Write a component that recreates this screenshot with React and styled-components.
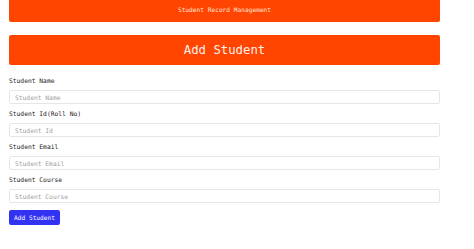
import styled, { createGlobalStyle } from 'styled-components';

const GlobalStyle = createGlobalStyle`
  body {
    margin: 0;
    background: #ffffff;
    font-family: "DejaVu Sans Mono", "Liberation Mono", monospace;
  }
`;

const Page = styled.div`
  width: 431px;
  margin-left: 9px;
  display: flex;
  flex-direction: column;
`;

const Header = styled.header`
  background-color: #ff4500;
  height: 22px;
  border-radius: 0 0 2px 2px;
  color: #ffe4d8;
  font-size: 6.2px;
  line-height: 8px;
  padding-top: 5.5px;
  box-sizing: border-box;
  text-align: center;
`;

const Title = styled.h1`
  margin: 13px 0 0 0;
  background-color: #ff4500;
  height: 30px;
  border-radius: 2px;
  color: #fff0e8;
  font-size: 12.3px;
  font-weight: normal;
  line-height: 30px;
  text-align: center;
`;

const Form = styled.form`
  display: flex;
  flex-direction: column;
  padding-top: 12px;
`;

const Field = styled.div`
  display: flex;
  flex-direction: column;
  gap: 5px;
  margin-bottom: 6px;
`;

const Label = styled.label`
  font-size: 6.3px;
  line-height: 8px;
  color: #1a1a1a;
  font-weight: normal;
`;

const Input = styled.input`
  height: 14px;
  box-sizing: border-box;
  border: 1px solid #e6e6e6;
  border-radius: 2px;
  padding: 0 5px;
  font-family: inherit;
  font-size: 6.3px;
  color: #333;
  outline: none;
  &::placeholder {
    color: #a0a0a0;
  }
`;

const SubmitButton = styled.button`
  margin-top: 1px;
  width: 51px;
  height: 15px;
  padding: 0;
  border: none;
  border-radius: 2px;
  background-color: #3232f2;
  color: #ffffff;
  font-family: inherit;
  font-size: 6.2px;
  cursor: pointer;
`;

const fields = [
  { label: 'Student Name', placeholder: 'Student Name' },
  { label: 'Student Id(Roll No)', placeholder: 'Student Id' },
  { label: 'Student Email', placeholder: 'Student Email' },
  { label: 'Student Course', placeholder: 'Student Course' },
];

export default function App() {
  return (
    <>
      <GlobalStyle />
      <Page>
        <Header>Student Record Management</Header>
        <Title>Add Student</Title>
        <Form onSubmit={(e) => e.preventDefault()}>
          {fields.map((f) => (
            <Field key={f.label}>
              <Label>{f.label}</Label>
              <Input type="text" placeholder={f.placeholder} />
            </Field>
          ))}
          <SubmitButton type="submit">Add Student</SubmitButton>
        </Form>
      </Page>
    </>
  );
}
